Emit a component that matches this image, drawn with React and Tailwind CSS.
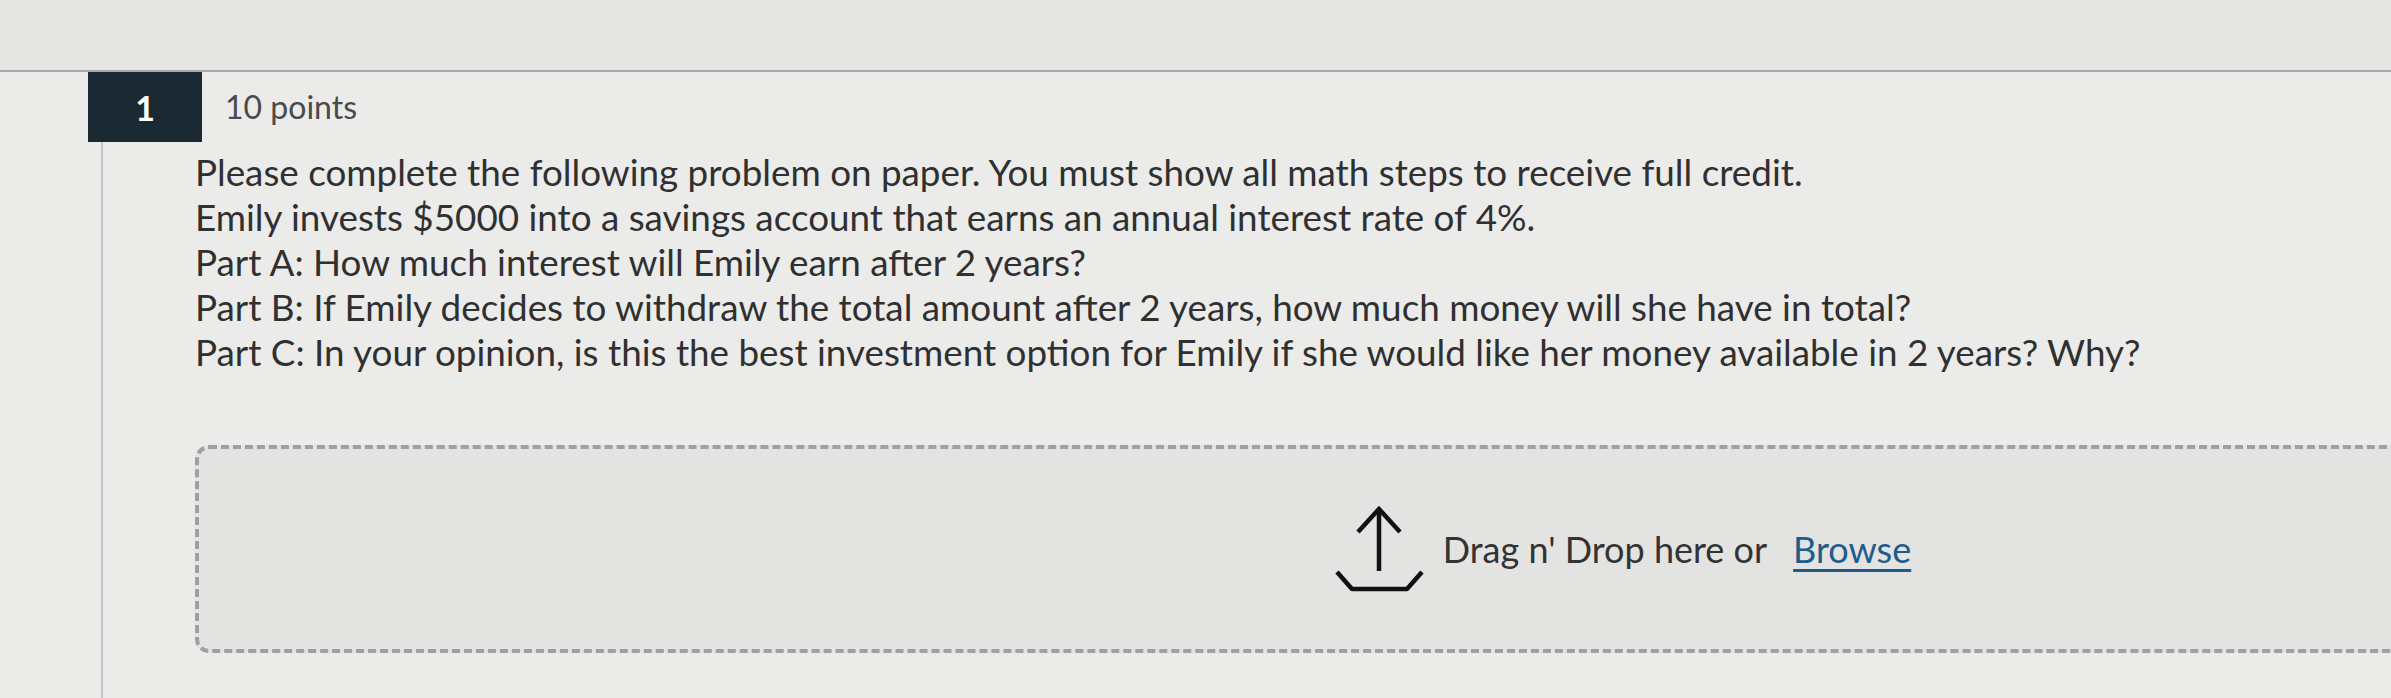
import React from "react";

const lines = [
    "Please complete the following problem on paper. You must show all math steps to receive full credit.",
    "Emily invests $5000 into a savings account that earns an annual interest rate of 4%.",
    "Part A: How much interest will Emily earn after 2 years?",
    "Part B: If Emily decides to withdraw the total amount after 2 years, how much money will she have in total?",
    "Part C: In your opinion, is this the best investment option for Emily if she would like her money available in 2 years? Why?",
];

const UploadIcon = () => (
    <svg width="90" height="88" viewBox="0 0 90 88" fill="none" stroke="#111" strokeWidth="4.5">
        <path d="M44 4 V66" />
        <path d="M23 27 L44 4 L65 27" strokeLinejoin="miter" />
        <path d="M2 67 L17 84 H72 L87 67" strokeLinejoin="round" />
    </svg>
);

export default function App() {
    return (
        <div className="w-full h-[698px] overflow-hidden bg-[#e6e6e5] font-['Lato',sans-serif]">
            <div className="pt-[70px]">
                <div className="border-t-2 border-[#a8a8a8] bg-[#ebebea] w-[3100px]">
                    {/* question header */}
                    <div className="flex items-center h-[70px]">
                        <div className="ml-[88px] w-[114px] h-full bg-[#1b2933] text-white text-[34px] font-bold flex items-center justify-center">
                            1
                        </div>
                        <div className="ml-[23px] text-[32px] text-[#4a4a4a]">10 points</div>
                    </div>

                    {/* question body */}
                    <div className="ml-[101px] border-l-2 border-[#c4c4c4] pl-[92px] pt-[8px] h-[560px]">
                        <div className="text-[36.8px] leading-[45px] text-[#303030]">
                            {lines.map((l) => (
                                <p key={l} className="whitespace-nowrap">{l}</p>
                            ))}
                        </div>

                        <div className="mt-[70px] w-[2856px] h-[208px] border-4 border-dashed border-[#a0a0a0] rounded-[14px] bg-[#e3e3e2] flex items-center justify-center gap-[18px]">
                            <UploadIcon />
                            <span className="text-[36px] text-[#333] whitespace-nowrap">Drag n' Drop here or</span>
                            <a href="#" className="ml-[8px] text-[36px] text-[#1d5d8c] underline decoration-[3px] underline-offset-[6px]">
                                Browse
                            </a>
                        </div>
                    </div>
                </div>
            </div>
        </div>
    );
}
